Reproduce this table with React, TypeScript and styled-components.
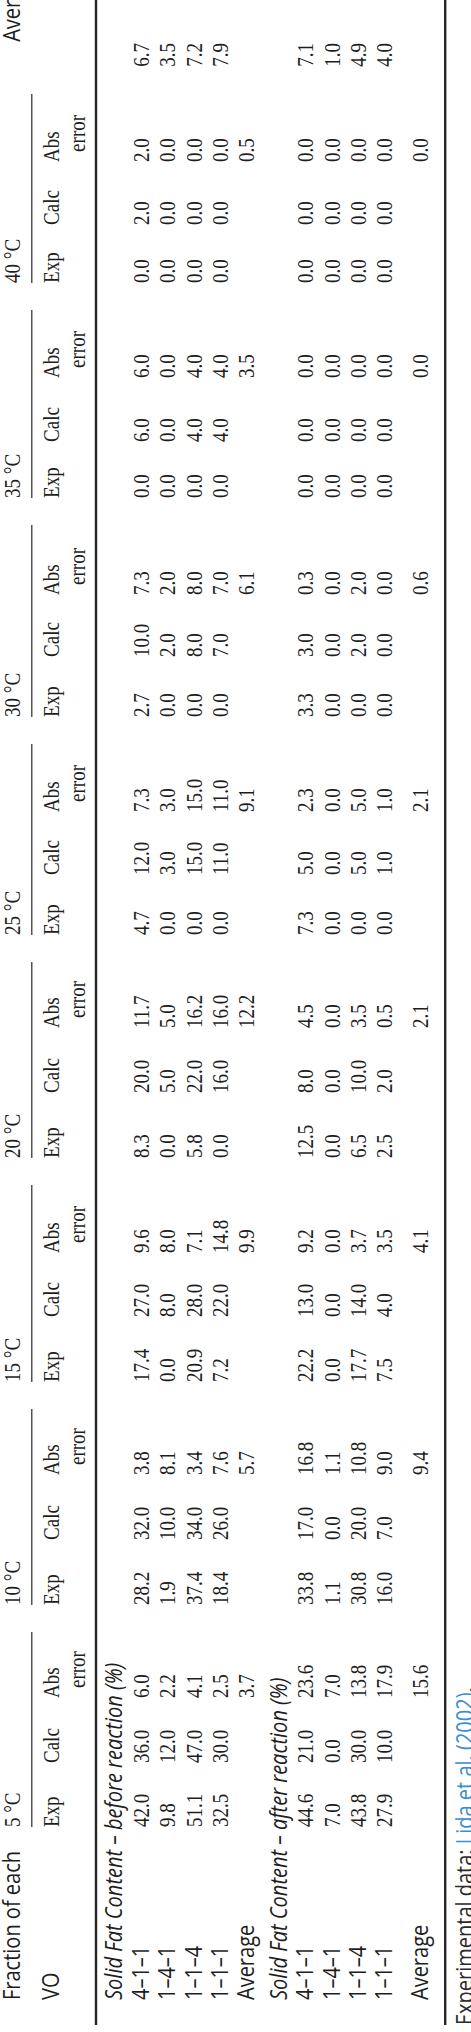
import React from 'react';
import styled, { createGlobalStyle } from 'styled-components';

const GlobalStyle = createGlobalStyle`
  html, body {
    margin: 0;
    padding: 0;
    background: #fff;
  }
`;

// the page is a landscape table turned on its side
const Page = styled.div`
  width: 471px;
  height: 2032px;
  overflow: hidden;
  background: #fff;
`;

const Sheet = styled.div`
  width: 2032px;
  height: 392px;
  padding-left: 2px;
  box-sizing: border-box;
  transform-origin: 0 0;
  transform: rotate(-90deg) translateX(-100%) scaleY(1.2);
  color: #1e1e1e;
`;

const Table = styled.table`
  border-collapse: separate;
  border-spacing: 0;
  table-layout: fixed;
  width: 2058px;
  margin-top: -5px;
  font-family: 'Liberation Serif', 'Times New Roman', serif;
  font-size: 19px;
  line-height: 22px;
`;

const Col = styled.col<{ $w: number }>`
  width: ${(p) => p.$w}px;
`;

const HeadCell = styled.th<{ $sub?: boolean; $stub?: boolean }>`
  padding: ${(p) => (p.$sub ? '5px 0 3px' : '0')};
  border-bottom: ${(p) => (p.$sub ? '2px solid #262626' : 'none')};
  text-align: left;
  vertical-align: top;
  font-weight: normal;
  white-space: nowrap;
  font-family: ${(p) => (p.$stub ? "'Open Sans', 'Liberation Sans', sans-serif" : 'inherit')};
  font-size: ${(p) => (p.$stub ? '20px' : 'inherit')};
  line-height: ${(p) => (p.$stub ? '19px' : 'inherit')};
  padding-left: ${(p) => (p.$stub ? '25px' : '0')};
`;

const GroupRule = styled.div`
  padding-bottom: 4px;
  margin-right: 27px;
  border-bottom: 1px solid #2a2a2a;
`;

const Hanging = styled.div`
  padding-left: 10px;
`;

const BodyCell = styled.td<{ $stub?: boolean; $pt?: number; $pb?: number; $rule?: boolean }>`
  padding: ${(p) => p.$pt ?? 0}px 0 ${(p) => (p.$pb ?? 0) + (p.$stub ? 3 : 0)}px ${(p) => (p.$stub ? 25 : 0)}px;
  border-bottom: ${(p) => (p.$rule ? '2px solid #262626' : 'none')};
  text-align: left;
  vertical-align: top;
  white-space: nowrap;
  font-family: ${(p) => (p.$stub ? "'Open Sans', 'Liberation Sans', sans-serif" : 'inherit')};
  font-size: ${(p) => (p.$stub ? '20px' : 'inherit')};
  line-height: ${(p) => (p.$stub ? '19px' : '22px')};
`;

const SectionCell = styled.td<{ $pt: number }>`
  padding: ${(p) => p.$pt}px 0 3px 25px;
  text-align: left;
  vertical-align: top;
  white-space: nowrap;
  font-family: 'Open Sans', 'Liberation Sans', sans-serif;
  font-size: 20px;
  line-height: 19px;
  font-style: italic;
`;

const Note = styled.p`
  margin: 3px 0 0;
  font-family: 'Open Sans', 'Liberation Sans', sans-serif;
  font-size: 20px;
  line-height: 24px;
  color: #2b2b2b;
  white-space: nowrap;
`;

const Ref = styled.span`
  color: #3a8ed2;
`;

type Group = { label: string; widths: [number, number, number] };

const groups: Group[] = [
  { label: '5 °C', widths: [64, 65, 93] },
  { label: '10 °C', widths: [65, 65, 93] },
  { label: '15 °C', widths: [65, 64, 95] },
  { label: '20 °C', widths: [65, 65, 93] },
  { label: '25 °C', widths: [60, 63, 95] },
  { label: '30 °C', widths: [60, 62, 97] },
  { label: '35 °C', widths: [56, 64, 95] },
  { label: '40 °C', widths: [58, 63, 95] },
];

type Row = { vo: string; values: string; avg: string };

type Section = { title: string; rows: Row[]; averages: string };

const sections: Section[] = [
  {
    title: 'before reaction (%)',
    rows: [
      { vo: '4–1–1', values: '42.0 36.0 6.0 28.2 32.0 3.8 17.4 27.0 9.6 8.3 20.0 11.7 4.7 12.0 7.3 2.7 10.0 7.3 0.0 6.0 6.0 0.0 2.0 2.0', avg: '6.7' },
      { vo: '1–4–1', values: '9.8 12.0 2.2 1.9 10.0 8.1 0.0 8.0 8.0 0.0 5.0 5.0 0.0 3.0 3.0 0.0 2.0 2.0 0.0 0.0 0.0 0.0 0.0 0.0', avg: '3.5' },
      { vo: '1–1–4', values: '51.1 47.0 4.1 37.4 34.0 3.4 20.9 28.0 7.1 5.8 22.0 16.2 0.0 15.0 15.0 0.0 8.0 8.0 0.0 4.0 4.0 0.0 0.0 0.0', avg: '7.2' },
      { vo: '1–1–1', values: '32.5 30.0 2.5 18.4 26.0 7.6 7.2 22.0 14.8 0.0 16.0 16.0 0.0 11.0 11.0 0.0 7.0 7.0 0.0 4.0 4.0 0.0 0.0 0.0', avg: '7.9' },
    ],
    averages: '3.7 5.7 9.9 12.2 9.1 6.1 3.5 0.5',
  },
  {
    title: 'after reaction (%)',
    rows: [
      { vo: '4–1–1', values: '44.6 21.0 23.6 33.8 17.0 16.8 22.2 13.0 9.2 12.5 8.0 4.5 7.3 5.0 2.3 3.3 3.0 0.3 0.0 0.0 0.0 0.0 0.0 0.0', avg: '7.1' },
      { vo: '1–4–1', values: '7.0 0.0 7.0 1.1 0.0 1.1 0.0 0.0 0.0 0.0 0.0 0.0 0.0 0.0 0.0 0.0 0.0 0.0 0.0 0.0 0.0 0.0 0.0 0.0', avg: '1.0' },
      { vo: '1–1–4', values: '43.8 30.0 13.8 30.8 20.0 10.8 17.7 14.0 3.7 6.5 10.0 3.5 0.0 5.0 5.0 0.0 2.0 2.0 0.0 0.0 0.0 0.0 0.0 0.0', avg: '4.9' },
      { vo: '1–1–1', values: '27.9 10.0 17.9 16.0 7.0 9.0 7.5 4.0 3.5 2.5 2.0 0.5 0.0 1.0 1.0 0.0 0.0 0.0 0.0 0.0 0.0 0.0 0.0 0.0', avg: '4.0' },
    ],
    averages: '15.6 9.4 4.1 2.1 2.1 0.6 0.0 0.0',
  },
];

const totalCols = 1 + groups.length * 3 + 1;

const SectionRows: React.FC<{ section: Section; index: number }> = ({ section, index }) => {
  const last = index === sections.length - 1;
  const avgPad = last ? { $pt: 8, $pb: 8, $rule: true } : { $pt: 0, $pb: 5 };
  return (
    <>
      <tr>
        <SectionCell colSpan={totalCols} $pt={index === 0 ? 4 : 0}>
          Solid Fat Content – {section.title}
        </SectionCell>
      </tr>
      {section.rows.map((row) => (
        <tr key={row.vo}>
          <BodyCell $stub>{row.vo}</BodyCell>
          {row.values.split(' ').map((v, i) => (
            <BodyCell key={i}>{v}</BodyCell>
          ))}
          <BodyCell>{row.avg}</BodyCell>
        </tr>
      ))}
      <tr>
        <BodyCell $stub {...avgPad}>
          Average
        </BodyCell>
        {section.averages.split(' ').map((a, i) => (
          <React.Fragment key={i}>
            <BodyCell {...avgPad} />
            <BodyCell {...avgPad} />
            <BodyCell {...avgPad}>{a}</BodyCell>
          </React.Fragment>
        ))}
        <BodyCell {...avgPad} />
      </tr>
    </>
  );
};

const App: React.FC = () => {
  return (
    <Page>
      <GlobalStyle />
      <Sheet>
        <Table>
          <colgroup>
            <Col $w={198} />
            {groups.map((g) => g.widths.map((w, i) => <Col key={g.label + i} $w={w} />))}
            <Col $w={100} />
          </colgroup>
          <thead>
            <tr>
              <HeadCell $stub>Fraction of each</HeadCell>
              {groups.map((g) => (
                <HeadCell key={g.label} colSpan={3}>
                  <GroupRule>{g.label}</GroupRule>
                </HeadCell>
              ))}
              <HeadCell $stub>Average</HeadCell>
            </tr>
            <tr>
              <HeadCell $sub $stub>
                VO
              </HeadCell>
              {groups.map((g) => (
                <React.Fragment key={g.label}>
                  <HeadCell $sub>Exp</HeadCell>
                  <HeadCell $sub>Calc</HeadCell>
                  <HeadCell $sub>
                    Abs
                    <Hanging>error</Hanging>
                  </HeadCell>
                </React.Fragment>
              ))}
              <HeadCell $sub />
            </tr>
          </thead>
          <tbody>
            {sections.map((s, i) => (
              <SectionRows key={s.title} section={s} index={i} />
            ))}
          </tbody>
        </Table>
        <Note>
          Experimental data: <Ref>Lida et al. (2002)</Ref>.
        </Note>
      </Sheet>
    </Page>
  );
};

export default App;
